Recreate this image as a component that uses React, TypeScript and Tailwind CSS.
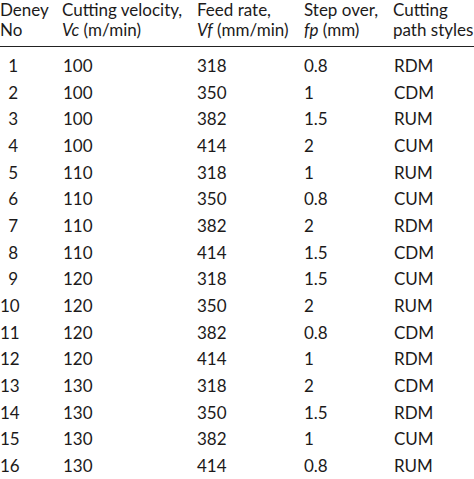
import React from "react";

const rows: [string, string, string, string, string][] = [
  ["1", "100", "318", "0.8", "RDM"],
  ["2", "100", "350", "1", "CDM"],
  ["3", "100", "382", "1.5", "RUM"],
  ["4", "100", "414", "2", "CUM"],
  ["5", "110", "318", "1", "RUM"],
  ["6", "110", "350", "0.8", "CUM"],
  ["7", "110", "382", "2", "RDM"],
  ["8", "110", "414", "1.5", "CDM"],
  ["9", "120", "318", "1.5", "CUM"],
  ["10", "120", "350", "2", "RUM"],
  ["11", "120", "382", "0.8", "CDM"],
  ["12", "120", "414", "1", "RDM"],
  ["13", "130", "318", "2", "CDM"],
  ["14", "130", "350", "1.5", "RDM"],
  ["15", "130", "382", "1", "CUM"],
  ["16", "130", "414", "0.8", "RUM"],
];

export default function App() {
  return (
    <div className="w-[474px] h-[479px] overflow-hidden bg-white text-[#1c1a1a] text-[17px] font-['Lato',sans-serif] whitespace-nowrap">
      <div className="grid grid-cols-[62px_135px_107px_89px_1fr] leading-[20px] h-[47px] border-b border-[#222]">
        <div>
          <div>Deney</div>
          <div>No</div>
        </div>
        <div>
          <div>Cutting velocity,</div>
          <div>
            <i>Vc</i> (m/min)
          </div>
        </div>
        <div>
          <div>Feed rate,</div>
          <div>
            <i>Vf</i> (mm/min)
          </div>
        </div>
        <div>
          <div>Step over,</div>
          <div>
            <i>fp</i> (mm)
          </div>
        </div>
        <div className="overflow-hidden">
          <div>Cutting</div>
          <div>path styles</div>
        </div>
      </div>
      <div className="pt-[6px]">
        {rows.map((r) => (
          <div
            key={r[0]}
            className="grid grid-cols-[62px_135px_107px_89px_1fr] h-[26.67px] leading-[26.67px]"
          >
            <div>
              <div className="w-[18px] text-right">{r[0]}</div>
            </div>
            <div className="pl-[1px]">{r[1]}</div>
            <div>{r[2]}</div>
            <div>{r[3]}</div>
            <div className="pl-[1px]">{r[4]}</div>
          </div>
        ))}
      </div>
    </div>
  );
}
